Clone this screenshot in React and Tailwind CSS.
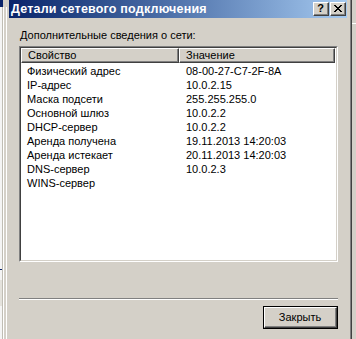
import React from 'react'

const rows = [
  ['Физический адрес', '08-00-27-C7-2F-8A'],
  ['IP-адрес', '10.0.2.15'],
  ['Маска подсети', '255.255.255.0'],
  ['Основной шлюз', '10.0.2.2'],
  ['DHCP-сервер', '10.0.2.2'],
  ['Аренда получена', '19.11.2013 14:20:03'],
  ['Аренда истекает', '20.11.2013 14:20:03'],
  ['DNS-сервер', '10.0.2.3'],
  ['WINS-сервер', ''],
]

function CaptionButton({ children }) {
  return (
    <div className="w-[16px] h-[14px] bg-[#d4d0c8] border-t border-l border-white border-r border-b border-r-[#404040] border-b-[#404040] flex items-center justify-center">
      <div className="w-full h-full border-r border-b border-[#808080] flex items-center justify-center text-black">
        {children}
      </div>
    </div>
  )
}

function HeaderCell({ label, className }) {
  return (
    <div className={`h-[15px] border-t border-l border-white border-b border-r border-b-[#404040] border-r-[#404040] ${className}`}>
      <div className="h-full border-b border-r border-[#808080] pl-[6px] leading-[13px]">{label}</div>
    </div>
  )
}

export default function App() {
  return (
    <div
      className="w-[356px] h-[339px] overflow-hidden flex bg-[#d4d0c8] text-[11px] text-black"
      style={{ fontFamily: '"Liberation Sans", Arial, sans-serif' }}
    >
      {/* window behind */}
      <div className="w-[8px] flex flex-col shrink-0">
        <div className="h-[7px] bg-[#0a246a] w-[3px]" />
        <div className="flex flex-1">
          <div className="w-[2px] bg-[#f4f4f4] flex flex-col">
            <div className="h-[262px]" />
            <div className="h-[1px] bg-[#0a246a]" />
            <div className="h-[10px]" />
            <div className="h-[26px] bg-[#e4e2dc]" />
          </div>
          <div className="w-[1px] bg-[#c0bdb4]" />
          <div className="w-[1px] bg-white" />
          <div className="w-[2px] bg-[#d4d0c8]" />
          <div className="w-[1px] bg-white" />
          <div className="w-[1px] bg-[#d4d0c8]" />
        </div>
      </div>

      {/* dialog */}
      <div className="w-[342px] shrink-0 flex flex-col">
        <div className="h-[18px] ml-[1px] mr-[3px] flex items-center justify-between bg-gradient-to-r from-[#0a246a] to-[#a6caf0] pl-[2px] pr-[1px]">
          <span className="text-white font-bold text-[12.5px] leading-none tracking-[0.2px]">Детали сетевого подключения</span>
          <div className="flex gap-[1px]">
            <CaptionButton>
              <span className="font-bold text-[11px] leading-none">?</span>
            </CaptionButton>
            <CaptionButton>
              <svg width="8" height="7" viewBox="0 0 8 7">
                <path d="M0 0 L7 7 M1 0 L8 7 M7 0 L0 7 M8 0 L1 7" stroke="black" strokeWidth="1" />
              </svg>
            </CaptionButton>
          </div>
        </div>

        <div className="flex-1 flex flex-col pl-[11px] pr-[5px]">
          <div className="mt-[11px] leading-[13px] pl-[1px]">Дополнительные сведения о сети:</div>

          {/* list view */}
          <div className="mt-[4px] w-[319px] h-[216px] border-t border-l border-[#808080] border-b border-r border-b-white border-r-white">
            <div className="h-full border-t border-l border-[#404040] border-b border-r border-b-[#d4d0c8] border-r-[#d4d0c8] bg-white flex flex-col">
              <div className="flex bg-[#d4d0c8]">
                <HeaderCell label="Свойство" className="w-[158px]" />
                <HeaderCell label="Значение" className="w-[156px]" />
                <div className="flex-1 h-[15px] border-t border-l border-white" />
              </div>
              <div className="pt-[1px]">
                {rows.map(([k, v]) => (
                  <div key={k} className="flex h-[14px] leading-[14px]">
                    <div className="w-[158px] pl-[6px]">{k}</div>
                    <div className="pl-[7px]">{v}</div>
                  </div>
                ))}
              </div>
            </div>
          </div>

          {/* separator */}
          <div className="mt-[36px] w-[319px] h-[2px] border-t border-[#808080] border-b border-b-white" />

          <div className="mt-[6px] w-[319px] flex justify-end">
            <div className="w-[75px] h-[23px] border border-black">
              <div className="h-full border-t border-l border-white border-b border-r border-b-[#404040] border-r-[#404040]">
                <div className="h-full border-b border-r border-[#808080] flex items-center justify-center leading-none">
                  Закрыть
                </div>
              </div>
            </div>
          </div>
        </div>
      </div>

      {/* right edge */}
      <div className="flex">
        <div className="w-[1px] bg-[#808080]" />
        <div className="w-[1px] bg-[#404040]" />
        <div className="flex-1 flex flex-col w-[4px]">
          <div className="h-[23px]" />
          <div className="h-[1px] bg-white" />
        </div>
      </div>
    </div>
  )
}
